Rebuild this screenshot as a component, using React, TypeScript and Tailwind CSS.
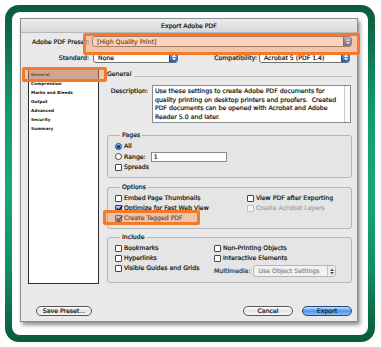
import React from "react";

const Arrows = ({ color = "#fff" }: { color?: string }) => (
  <svg width="4" height="7" viewBox="0 0 4 7">
    <path d="M0 3 L2 0.6 L4 3 Z M0 4 L2 6.4 L4 4 Z" fill={color} />
  </svg>
);

const Select = ({
  text,
  className = "",
  disabled = false,
  h = "h-[11px]",
}: {
  text: string;
  className?: string;
  disabled?: boolean;
  h?: string;
}) => (
  <div
    className={`${h} flex rounded-[3px] border overflow-hidden ${
      disabled ? "border-[#b4b4b4] bg-[#f2f2f2] text-[#8a8a8a]" : "border-[#6f6f6f] bg-white"
    } ${className}`}
  >
    <div className="flex-1 pl-[4px] flex items-center whitespace-nowrap">{text}</div>
    <div
      className={`w-[8px] flex items-center justify-center border-l ${
        disabled
          ? "bg-[#ececec] border-[#c4c4c4]"
          : "bg-gradient-to-b from-[#8dbcf5] via-[#3d7fe0] to-[#1c58c0] border-[#2a4f8a]"
      }`}
    >
      <Arrows color={disabled ? "#555" : "#fff"} />
    </div>
  </div>
);

const Box = ({ checked, disabled }: { checked?: boolean; disabled?: boolean }) => (
  <span
    className={`relative inline-block w-[7px] h-[7px] rounded-[1px] border shrink-0 ${
      disabled
        ? "border-[#c0c0c0] bg-[#f4f4f4]"
        : checked
        ? "border-[#2b3f6a] bg-gradient-to-b from-[#b9d5fa] to-[#5b92e0]"
        : "border-[#444] bg-white"
    }`}
  >
    {checked && (
      <svg className="absolute left-[0px] top-[-1px]" width="7" height="7" viewBox="0 0 7 7">
        <path d="M1 3.6 L2.7 5.6 L6.4 0.6" stroke="#0d1f4d" strokeWidth="1.5" fill="none" />
      </svg>
    )}
  </span>
);

const Check = ({
  checked,
  disabled,
  children,
}: {
  checked?: boolean;
  disabled?: boolean;
  children: React.ReactNode;
}) => (
  <div className={`flex items-center h-[10px] gap-[2px] whitespace-nowrap ${disabled ? "text-[#a3a3a3]" : ""}`}>
    <Box checked={checked} disabled={disabled} />
    <span>{children}</span>
  </div>
);

const Radio = ({ on, children }: { on?: boolean; children: React.ReactNode }) => (
  <div className="flex items-center gap-[2px] whitespace-nowrap">
    <span
      className={`relative inline-flex items-center justify-center w-[7px] h-[7px] rounded-full border shrink-0 ${
        on ? "border-[#1c3d7a] bg-gradient-to-b from-[#a9cbf7] to-[#3f7fdc]" : "border-[#444] bg-white"
      }`}
    >
      {on && <span className="w-[3px] h-[3px] rounded-full bg-[#0d1f4d]" />}
    </span>
    <span>{children}</span>
  </div>
);

const Group = ({ title, children, className = "" }: { title: string; children: React.ReactNode; className?: string }) => (
  <fieldset className={`border border-[#b6b6b6] rounded-[3px] bg-[#e5e5e5] pl-[7px] pt-[2px] pb-[5px] ${className}`}>
    <legend className="ml-[5px] px-[2px] leading-[8px]">{title}</legend>
    {children}
  </fieldset>
);

const Button = ({ children, className = "", blue = false }: { children: React.ReactNode; className?: string; blue?: boolean }) => (
  <div
    className={`h-[10px] rounded-full border flex items-center justify-center leading-none ${
      blue
        ? "border-[#27477e] bg-gradient-to-b from-[#c9e2fc] via-[#4f93ea] to-[#8cc0f6] text-[#0a1a3a]"
        : "border-[#555] bg-gradient-to-b from-[#ffffff] via-[#e4e4e4] to-[#f7f7f7]"
    } ${className}`}
  >
    {children}
  </div>
);

const sidebarItems = ["General", "Compression", "Marks and Bleeds", "Output", "Advanced", "Security", "Summary"];

export default function App() {
  return (
    <div className="relative w-[381px] h-[347px] bg-white pl-[5px] pt-[5px] font-['DejaVu_Sans',sans-serif] text-[6.2px] leading-[8px] text-[#111] [-webkit-text-stroke:0.2px_currentColor]">
      <div className="w-[370px] h-[337px] rounded-[14px] p-[7px] bg-[linear-gradient(180deg,#0a5a3b_0%,#139a6c_30%,#18a877_55%,#109063_78%,#0a5a3b_100%)]">
        <div className="w-full h-full rounded-[8px] bg-white pl-[8px] pt-[6px]">
          <div className="w-[338px] h-[304px] bg-[#e9e9e9] border border-[#8c8c8c] shadow-[2px_3px_4px_rgba(0,0,0,0.45)] flex flex-col">
            {/* title bar */}
            <div className="h-[14px] shrink-0 bg-gradient-to-b from-[#ededed] to-[#d8d8d8] border-b border-[#b8b8b8] flex items-center justify-center pt-[1px]">
              Export Adobe PDF
            </div>
            {/* body */}
            <div className="flex-1 flex flex-col pl-[7px] pr-[5px] pt-[3px]">
              <div className="flex items-center h-[11px]">
                <div className="w-[61px] text-right whitespace-nowrap">Adobe PDF Preset:</div>
                <Select text="[High Quality Print]" className="ml-[3px] flex-1" />
              </div>
              <div className="flex items-center h-[11px] mt-[5px]">
                <div className="w-[61px] text-right whitespace-nowrap">Standard:</div>
                <Select text="None" className="ml-[4px] w-[85px]" />
                <div className="flex-1 text-right whitespace-nowrap">Compatibility:</div>
                <Select text="Acrobat 5 (PDF 1.4)" className="ml-[2px] mr-[2px] w-[91px]" />
              </div>
              {/* main area */}
              <div className="flex mt-[6px] h-[215px] gap-[8px]">
                <div className="w-[71px] h-full border border-[#2e2e2e] bg-white text-[4.2px] font-bold leading-[9px] [-webkit-text-stroke:0px]">
                  {sidebarItems.map((s, i) => (
                    <div key={s} className={`h-[9px] pl-[2px] whitespace-nowrap ${i === 0 ? "bg-[#b4b4b4]" : ""}`}>
                      {s}
                    </div>
                  ))}
                </div>
                <div className="flex-1 flex flex-col">
                  <div className="h-[9px] flex items-end gap-[3px]">
                    <span className="leading-[9px]">General</span>
                    <div className="flex-1 h-px bg-[#bdbdbd] mb-[1px]" />
                  </div>
                  <div className="flex mt-[7px]">
                    <div className="w-[41px] text-right pt-[2px]">Description:</div>
                    <div className="ml-[4px] mr-[1px] flex-1 h-[38px] border border-[#8a8a8a] bg-white flex">
                      <div className="flex-1 pl-[2px] pt-[1px] leading-[8.6px] whitespace-pre">
                        {"Use these settings to create Adobe PDF documents for\nquality printing on desktop printers and proofers.  Created\nPDF documents can be opened with Acrobat and Adobe\nReader 5.0 and later."}
                      </div>
                      <div className="w-[6px] border-l border-[#c8c8c8] bg-[#fafafa]" />
                    </div>
                  </div>
                  <Group title="Pages" className="mt-[8px]">
                    <div className="h-[10px] flex items-center">
                      <Radio on>All</Radio>
                    </div>
                    <div className="h-[11px] flex items-center">
                      <Radio>Range:</Radio>
                      <div className="ml-[5px] w-[76px] h-[10px] border border-[#8a8a8a] bg-white pl-[2px] flex items-center">1</div>
                    </div>
                    <Check>Spreads</Check>
                  </Group>
                  <Group title="Options" className="mt-[5px]">
                    <div className="grid grid-cols-[132px_1fr]">
                      <div>
                        <Check>Embed Page Thumbnails</Check>
                        <Check checked>Optimize for Fast Web View</Check>
                        <Check checked>Create Tagged PDF</Check>
                      </div>
                      <div>
                        <Check>View PDF after Exporting</Check>
                        <Check disabled>Create Acrobat Layers</Check>
                      </div>
                    </div>
                  </Group>
                  <Group title="Include" className="mt-[4px]">
                    <div className="grid grid-cols-[99px_1fr]">
                      <div>
                        <Check>Bookmarks</Check>
                        <Check>Hyperlinks</Check>
                        <Check>Visible Guides and Grids</Check>
                      </div>
                      <div>
                        <Check>Non-Printing Objects</Check>
                        <Check>Interactive Elements</Check>
                        <div className="flex items-center mt-[2px]">
                          <span className="text-[#333]">Multimedia:</span>
                          <Select text="Use Object Settings" disabled h="h-[12px]" className="ml-[3px] w-[83px]" />
                        </div>
                      </div>
                    </div>
                  </Group>
                </div>
              </div>
              {/* buttons */}
              <div className="flex mt-[22px]">
                <Button className="ml-[8px] w-[56px]">Save Preset...</Button>
                <div className="flex-1" />
                <Button className="w-[50px]">Cancel</Button>
                <Button blue className="ml-[9px] w-[50px]">Export</Button>
              </div>
            </div>
          </div>
        </div>
      </div>
      {/* orange highlight overlays */}
      <div className="absolute left-[83px] top-[33px] w-[277px] h-[22px] border-[3px] border-[#f47a2a] bg-[rgba(247,150,90,0.42)] rounded-[2px]" />
      <div className="absolute left-[22px] top-[67px] w-[85px] h-[15px] border-[3px] border-[#f47a2a] bg-[rgba(247,150,90,0.42)] rounded-[2px]" />
      <div className="absolute left-[103px] top-[210px] w-[97px] h-[15px] border-[3px] border-[#f47a2a] bg-[rgba(247,150,90,0.42)] rounded-[2px]" />
    </div>
  );
}
